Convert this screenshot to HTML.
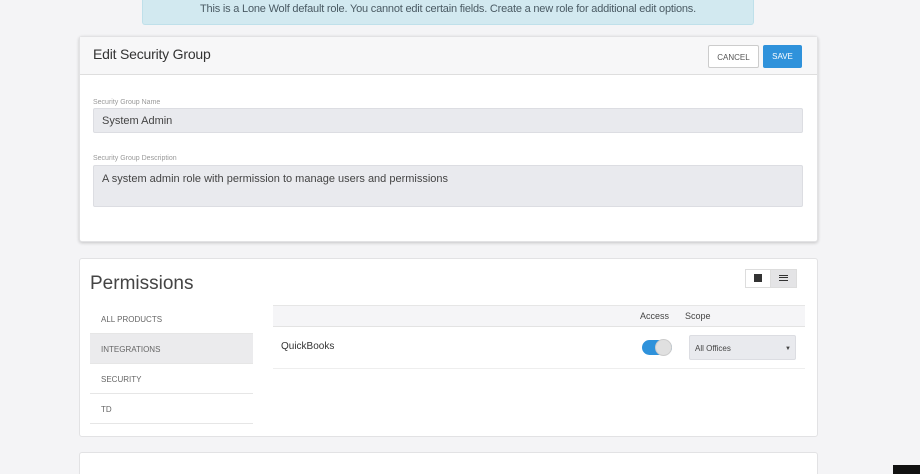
<!DOCTYPE html>
<html><head><style>
*{box-sizing:border-box;margin:0;padding:0}
html,body{width:920px;height:474px;overflow:hidden}
body{background:#f4f4f6;font-family:"Liberation Sans",sans-serif;color:#333;position:relative}
.abs{position:absolute}
.alert{left:142px;top:0;width:612px;height:25px;background:#d2e9f0;border:1px solid #bfe0ea;border-top:none;border-radius:0 0 3px 3px;font-size:11px;color:#4a5a63;text-align:center;line-height:18px;letter-spacing:-0.2px}
.card{background:#fff;border:1px solid #e2e2e4;border-radius:3px}
.head{left:80px;top:37px;width:737px;height:38px;background:#f7f7f8;border-bottom:1px solid #dedede}
.lbl{font-size:7px;color:#999}
.inp{background:#e9eaee;border:1px solid #dcdde2;border-radius:2px;font-size:11px;color:#444;padding-left:8px}
.btn{font-size:8px;text-align:center;line-height:24px;border-radius:2px}
.nav{left:90px;width:163px;height:30px;font-size:8px;color:#666;padding-left:11px;line-height:32px;border-bottom:1px solid #e6e6e6}
</style></head><body>
<div class="abs alert">This is a Lone Wolf default role. You cannot edit certain fields. Create a new role for additional edit options.</div>
<div class="abs card" style="left:79px;top:36px;width:739px;height:206px;box-shadow:0 1px 3px rgba(0,0,0,.2)"></div>
<div class="abs head"></div>
<div class="abs" style="left:93px;top:46px;font-size:14px;color:#333;letter-spacing:-0.2px">Edit Security Group</div>
<div class="abs btn" style="left:708px;top:45px;width:51px;height:23px;border:1px solid #ccc;background:#fff;color:#555">CANCEL</div>
<div class="abs btn" style="left:763px;top:45px;width:39px;height:23px;background:#2f92db;color:#fff">SAVE</div>
<div class="abs lbl" style="left:93px;top:99px">Security Group Name</div>
<div class="abs inp" style="left:93px;top:108px;width:710px;height:25px;line-height:24px">System Admin</div>
<div class="abs lbl" style="left:93px;top:155px">Security Group Description</div>
<div class="abs inp" style="left:93px;top:165px;width:710px;height:42px;padding-top:7px">A system admin role with permission to manage users and permissions</div>
<div class="abs card" style="left:79px;top:258px;width:739px;height:179px"></div>
<div class="abs" style="left:90px;top:273px;font-size:19px;color:#444">Permissions</div>
<div class="abs" style="left:745px;top:269px;width:52px;height:19px;border:1px solid #ddd;background:#fff"></div>
<div class="abs" style="left:770px;top:269px;width:27px;height:19px;background:#e4e4e6;border:1px solid #ddd"></div>
<div class="abs" style="left:754px;top:274px;width:8px;height:8px;background:#333"></div>
<div class="abs" style="left:779px;top:275px;width:9px;height:6px;border-top:1px solid #333;border-bottom:1px solid #333"><div style="margin-top:1px;border-top:1px solid #333"></div></div>
<div class="abs nav" style="top:304px">ALL PRODUCTS</div>
<div class="abs nav" style="top:334px;background:#ebebed">INTEGRATIONS</div>
<div class="abs nav" style="top:364px">SECURITY</div>
<div class="abs nav" style="top:394px">TD</div>
<div class="abs" style="left:273px;top:305px;width:532px;height:22px;background:#f5f5f7;border-top:1px solid #e6e6e6;border-bottom:1px solid #e3e3e3"></div>
<div class="abs" style="left:640px;top:311px;font-size:9px;color:#444">Access</div>
<div class="abs" style="left:685px;top:311px;font-size:9px;color:#444">Scope</div>
<div class="abs" style="left:281px;top:341px;font-size:10px;color:#333">QuickBooks</div>
<div class="abs" style="left:642px;top:340px;width:30px;height:15px;border-radius:8px;background:#2f92db"></div>
<div class="abs" style="left:655px;top:339px;width:17px;height:17px;border-radius:50%;background:#e0e0e0;border:1px solid #ccc"></div>
<div class="abs inp" style="left:689px;top:335px;width:107px;height:25px;line-height:26px;font-size:8px;padding-left:5px">All Offices<span style="position:absolute;right:4px;font-size:6px">▼</span></div>
<div class="abs" style="left:273px;top:368px;width:532px;border-top:1px solid #eee"></div>
<div class="abs card" style="left:79px;top:452px;width:739px;height:30px"></div>
<div class="abs" style="left:893px;top:465px;width:27px;height:9px;background:#111"></div>
</body></html>
